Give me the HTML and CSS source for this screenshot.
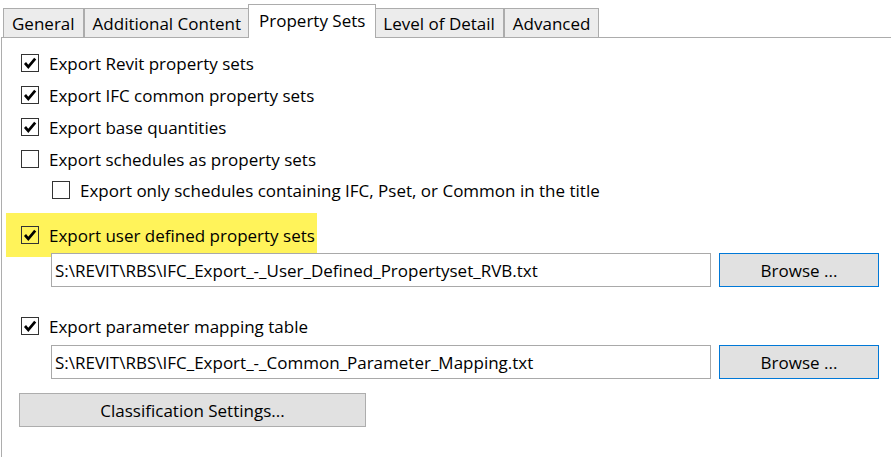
FILE: index.html
```html
<!DOCTYPE html>
<html>
<head>
<meta charset="utf-8">
<link rel="stylesheet" href="styles.css">
</head>
<body>
<div class="window">
  <div class="tabs">
    <div class="tab">General</div>
    <div class="tab">Additional Content</div>
    <div class="tab active">Property Sets</div>
    <div class="tab">Level of Detail</div>
    <div class="tab">Advanced</div>
  </div>
  <div class="panel">
    <div class="row"><span class="cb"><svg viewBox="0 0 16 16"><path d="M3 8 L6.3 11.8 L13.2 3.6"/></svg></span><span>Export Revit property sets</span></div>
    <div class="row"><span class="cb"><svg viewBox="0 0 16 16"><path d="M3 8 L6.3 11.8 L13.2 3.6"/></svg></span><span>Export IFC common property sets</span></div>
    <div class="row"><span class="cb"><svg viewBox="0 0 16 16"><path d="M3 8 L6.3 11.8 L13.2 3.6"/></svg></span><span>Export base quantities</span></div>
    <div class="row"><span class="cb"></span><span>Export schedules as property sets</span></div>
    <div class="row sub"><span class="cb"></span><span>Export only schedules containing IFC, Pset, or Common in the title</span></div>
    <div class="row highlight"><span class="cb"><svg viewBox="0 0 16 16"><path d="M3 8 L6.3 11.8 L13.2 3.6"/></svg></span><span>Export user defined property sets</span></div>
    <div class="file-row">
      <div class="field">S:\REVIT\RBS\IFC_Export_-_User_Defined_Propertyset_RVB.txt</div>
      <div class="btn browse">Browse ...</div>
    </div>
    <div class="row param"><span class="cb"><svg viewBox="0 0 16 16"><path d="M3 8 L6.3 11.8 L13.2 3.6"/></svg></span><span>Export parameter mapping table</span></div>
    <div class="file-row second">
      <div class="field">S:\REVIT\RBS\IFC_Export_-_Common_Parameter_Mapping.txt</div>
      <div class="btn browse">Browse ...</div>
    </div>
    <div class="btn classify">Classification Settings...</div>
  </div>
</div>
</body>
</html>
```

FILE: styles.css
```css
html, body {
  margin: 0;
  padding: 0;
  background: #fff;
}
body {
  width: 891px;
  height: 457px;
  overflow: hidden;
  font-family: "Open Sans", "Noto Sans", sans-serif;
  font-size: 17px;
  color: #000;
}
.window {
  padding-left: 1px;
}
.tabs {
  display: flex;
  align-items: flex-end;
  height: 37px;
  border-bottom: 1px solid #acacac;
  padding-left: 2px;
}
.tab {
  height: 29px;
  box-sizing: border-box;
  border: 1px solid #acacac;
  border-bottom: none;
  background: #ececec;
  padding: 0 8px;
  display: flex;
  align-items: center;
  justify-content: center;
  white-space: nowrap;
}
.tab.active {
  position: relative;
  z-index: 1;
  height: 34px;
  margin: 0 -2px -1px -2px;
  padding: 0 10px 2px;
  background: #fff;
}
.panel {
  border-left: 1px solid #adadad;
  height: 419px;
  box-sizing: border-box;
  padding: 9px 0 0 19px;
}
.row {
  display: flex;
  align-items: center;
  height: 32px;
  gap: 10px;
  white-space: nowrap;
}
.row.sub {
  height: 30px;
  padding-left: 31px;
}
.row.highlight {
  width: fit-content;
  height: 44px;
  margin: 8px 0 -4px -15px;
  padding: 0 2px 0 15px;
  background: #fff35a;
}
.row.param {
  margin-top: 23px;
}
.cb {
  width: 18px;
  height: 18px;
  box-sizing: border-box;
  border: 1px solid #333;
  flex: none;
  display: flex;
}
.cb svg {
  width: 16px;
  height: 16px;
}
.cb path {
  fill: none;
  stroke: #000;
  stroke-width: 2.7;
}
.file-row {
  display: flex;
  gap: 8px;
  margin-left: 30px;
  height: 34px;
}
.file-row.second {
  margin-top: 3px;
}
.field {
  width: 660px;
  height: 34px;
  box-sizing: border-box;
  border: 1px solid #a9a9a9;
  background: #fff;
  padding-left: 3px;
  display: flex;
  align-items: center;
  white-space: nowrap;
}
.btn {
  height: 34px;
  box-sizing: border-box;
  background: #e1e1e1;
  border: 1px solid #adadad;
  display: flex;
  align-items: center;
  justify-content: center;
  white-space: nowrap;
}
.btn.browse {
  width: 160px;
  border-color: #0078d7;
}
.btn.classify {
  width: 347px;
  margin: 14px 0 0 -2px;
}
```
